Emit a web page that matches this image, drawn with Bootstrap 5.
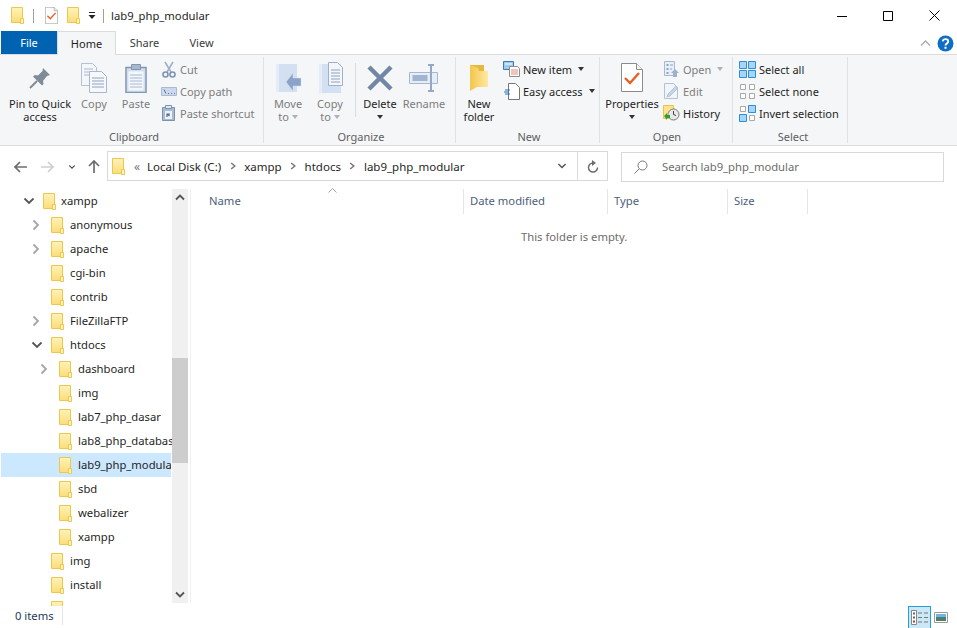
<!doctype html>
<html lang="en">
<head>
<meta charset="utf-8">
<title>lab9_php_modular</title>
<link href="https://cdn.jsdelivr.net/npm/bootstrap@5.3.0/dist/css/bootstrap.min.css" rel="stylesheet">
<style>
html,body{height:100%;margin:0;overflow:hidden}
body{font-family:"Noto Sans","Open Sans","Liberation Sans",sans-serif;font-size:11.25px;color:#1f1f1f;background:#fff;line-height:13px}
svg{display:block;flex:none}
.sprite{width:0;height:0;overflow:hidden}
.win{width:957px;height:628px}
.titlebar{height:31px;padding-left:11px}
.qsep{width:1px;height:14px;background:#a0a0a0}
.qs1{margin:0 11px 0 9px}
.qs2{margin:0 7px 0 5px}
.qgap{margin-left:9px}
.qgap2{margin-left:6px}
.wctl{width:46px;height:31px}
.tabrow{height:23px;padding-left:1px;font-size:11px}
.tb{width:57px;height:23px;color:#3b3b3b}
.tb-file{width:56px;background:#0063b1;color:#fff}
.tb-home{width:59px;height:24px;background:#f5f6f7;border:1px solid #dadbdc;border-bottom:0;position:relative;z-index:1;color:#1f1f1f}
.tabrow-end{padding-right:3px;padding-top:1px;gap:6px}
.ribbon{height:92px;background:#f5f6f7;border-top:1px solid #dadbdc;border-bottom:1px solid #dadbdc;padding-top:2px;font-size:11px}
.rgrp{height:86px;border-right:1px solid #e1e2e3}
.g1{width:264px;padding-left:5px}
.g2{width:192px;padding-left:3px}
.g3{width:144px;padding-left:3px}
.g4{width:133px;padding-left:2px}
.g5{width:115px;padding-left:6px}
.rbody{height:73px;padding-top:1px}
.rlabel{height:13px;text-align:center;color:#5f5f5f}
.bigb{display:flex;flex-direction:column;align-items:center;text-align:center}
.bigi{height:39px;display:flex;align-items:center;justify-content:center}
.w70{width:70px}.w38{width:38px}.w46{width:46px}.w42{width:42px}.w40{width:40px}.w60{width:60px}
.gs1{margin-left:1px}
.gs2{margin-left:3px}
.gs3{margin-left:4px}
.gs4{margin-left:1px}
.vsep{width:1px;height:54px;background:#dadbdc;margin:5px 4px 0 4px}
.smcol{display:flex;flex-direction:column}
.smb{height:22px;display:flex;align-items:center;gap:3px;white-space:nowrap}
.smi{width:17px;height:17px;display:flex;align-items:center;justify-content:center;flex:none}
.dis{color:#7d7d7d}
.ena{color:#1f1f1f}
.crt{display:inline-block;width:0;height:0;border:3px solid transparent;border-top:4px solid #333;border-bottom:0;vertical-align:2px;margin-left:3px}
.crt-d{border-top-color:#b0b0b0}
.crt-line{display:block;margin:5px auto 0}
.navrow{height:41px}
.navbtns{width:107px;padding-left:8px}
.navbtn{width:24px;height:24px}
.nb-mid{width:30px}
.nb-small{width:20px}
.addr{width:501px;height:30px;border:1px solid #d9d9d9;margin-top:-1px}
.addr-f{margin:0 9px 0 4px}
.crumbs{color:#1f1f1f;white-space:nowrap;font-size:11.5px}
.bq{width:13px;color:#777;font-size:12px}
.csep{width:23px}
.addr-dd{width:30px;height:100%}
.addr-rf{width:30px;height:100%;border-left:1px solid #d9d9d9}
.search{width:323px;height:30px;margin-left:13px;border:1px solid #d9d9d9;padding-left:12px;color:#6d6d6d;gap:14px}
.main{height:419px}
.treewrap{width:172px;padding-top:2px;overflow:hidden}
.trow{height:24px;white-space:nowrap;overflow:hidden}
.l0{padding-left:23px}.l1{padding-left:31px}.l2{padding-left:39px}
.tchev{width:20px;flex:none}
.tname{margin-left:5px;margin-top:-2px;color:#1f1f1f}
.l1 .tname,.l2 .tname{margin-left:6px}
.trow-sel{background:#cce8ff;margin-left:1px;width:170px}
.trow-sel.l2{padding-left:38px}
.sbar{width:16px;margin-top:2px;margin-bottom:3px;background:#f0f0f0}
.sarr{height:17px}
.strack{flex:1 1 auto}
.sthumb{height:105px;margin-top:152px;background:#cdcdcd}
.vline{width:1px;margin:2px 0 3px 2px;background:#efefef}
.files{flex:1 1 auto;min-width:0}
.chead{height:25px;margin-top:2px;color:#4c607a;padding-left:18px;position:relative}
.hcol{height:25px;line-height:24px;padding-left:6px;border-right:1px solid #e5e5e5}
.hc1{width:255px;padding-left:0}
.hc2{width:144px}.hc3{width:120px}.hc4{width:80px}
.sortc{position:absolute;left:137px;top:-1px}
.empty{margin-top:16px;padding-left:330px;color:#6d6d6d}
.status{height:22px;color:#1e395b;padding-left:15px}
.stxt{padding-right:8px;border-right:1px solid #e5e5e5;line-height:18px;margin-top:-3px}
.views{padding-right:9px;gap:3px}
.vact{width:23px;height:23px;background:#cbe8f6;border:1px solid #26a0da}
</style>
</head>
<body>
<svg class="sprite" width="0" height="0">
<defs>
<linearGradient id="fg" x1="0" y1="0" x2="0" y2="1"><stop offset="0" stop-color="#fff3b8"/><stop offset="1" stop-color="#fddc78"/></linearGradient>
<symbol id="fold" viewBox="0 0 13 17"><path d="M.5.5h11v15H.5z" fill="url(#fg)" stroke="#ebc84f"/><path d="M9.500 11.500h3v5h-3z" fill="#fff3c0" stroke="#ebc84f"/></symbol>
<symbol id="chr" viewBox="0 0 10 12"><path d="M2.5 1.5 7 6l-4.500 4.500" fill="none" stroke="#a6a6a6" stroke-width="1.800"/></symbol>
<symbol id="chd" viewBox="0 0 12 10"><path d="M1.500 2.500 6 7l4.500-4.500" fill="none" stroke="#555" stroke-width="1.800"/></symbol>
<symbol id="prop" viewBox="0 0 22 29"><path d="M.5.500h15l6 6v22H.500z" fill="#fff" stroke="#8c8c8c"/><path d="M15.500.500v6h6" fill="#f2f2f2" stroke="#8c8c8c"/><path d="M4 15l5 5 9-10" fill="none" stroke="#e8601f" stroke-width="2.400"/></symbol>
</defs>
</svg>
<div class="win d-flex flex-column">

  <div class="titlebar d-flex align-items-center">
    <svg width="13" height="17"><use href="#fold"/></svg>
    <span class="qsep qs1"></span>
    <svg width="13" height="17"><use href="#prop"/></svg>
    <svg class="qgap" width="13" height="17"><use href="#fold"/></svg>
    <svg class="qgap2" width="12" height="12" viewBox="0 0 12 12"><path d="M3 2.500h6" stroke="#222"/><path d="M2.500 5h7L6 9z" fill="#222"/></svg>
    <span class="qsep qs2"></span>
    <span>lab9_php_modular</span>
    <div class="ms-auto d-flex">
      <div class="wctl d-flex align-items-center justify-content-center"><svg width="10" height="10" viewBox="0 0 10 10"><path d="M0 5.500h10" stroke="#000"/></svg></div>
      <div class="wctl d-flex align-items-center justify-content-center"><svg width="10" height="10" viewBox="0 0 10 10"><path d="M.5.500h9v9h-9z" fill="none" stroke="#000"/></svg></div>
      <div class="wctl d-flex align-items-center justify-content-center"><svg width="11" height="11" viewBox="0 0 11 11"><path d="M.500.500l10 10M10.500.500l-10 10" stroke="#000"/></svg></div>
    </div>
  </div>

  <div class="tabrow d-flex">
    <div class="tb tb-file d-flex align-items-center justify-content-center">File</div>
    <div class="tb tb-home d-flex align-items-center justify-content-center">Home</div>
    <div class="tb d-flex align-items-center justify-content-center">Share</div>
    <div class="tb d-flex align-items-center justify-content-center">View</div>
    <div class="ms-auto d-flex align-items-center tabrow-end">
      <svg width="11" height="8" viewBox="0 0 11 8"><path d="M1 6.500 5.500 2 10 6.500" fill="none" stroke="#aaa" stroke-width="1.400"/></svg>
      <svg width="17" height="17" viewBox="0 0 17 17"><circle cx="8.500" cy="8.500" r="8" fill="#0f6fc6"/><path d="M5.800 6.400c.2-3 5.400-3 5.400 0 0 2-2.700 2-2.700 4" fill="none" stroke="#fff" stroke-width="1.900"/><path d="M7.500 11.800h2v2h-2z" fill="#fff"/></svg>
    </div>
  </div>

  <div class="ribbon d-flex">
    <div class="rgrp g1">
      <div class="rbody d-flex">
        <div class="bigb w70"><div class="bigi"><svg width="22" height="22" viewBox="0 0 22 22"><path d="M1 21l7-7" stroke="#7f8c97" stroke-width="2"/><path d="M14 1l7 7-3 1-4 5 .5 3-1.500 1.500-9-9L6 8l3 .5 4.500-4.500z" fill="#7f8c97"/></svg></div>Pin to Quick<br>access</div>
        <div class="bigb w38 dis"><div class="bigi"><svg width="26" height="30" viewBox="0 0 26 30"><path d="M.500.500h11l4 4v18H.500z" fill="#f3f6fb" stroke="#b3c2d6"/><path d="M3 6h9M3 9h9M3 12h6" stroke="#a8bad2"/><path d="M8.500 8.500h12l5 5v16h-17z" fill="#f6f8fc" stroke="#a9b8cb"/><path d="M11 15h12M11 18h12M11 21h12M11 24h12" stroke="#8ea4c2"/></svg></div>Copy</div>
        <div class="bigb w46 dis"><div class="bigi"><svg width="22" height="30" viewBox="0 0 22 30"><path d="M1 4.500h20v25H1z" fill="#d4dfee" stroke="#8296b1" stroke-width="1.500"/><path d="M6.500 1.500h9v5h-9z" fill="#a6b7ce" stroke="#8296b1"/><path d="M3.500 8.500h15v19h-15z" fill="#f3f6fb"/><path d="M5 12h12M5 15h12M5 18h12M5 21h12M5 24h12" stroke="#a8bad2"/></svg></div>Paste</div>
        <div class="smcol gs1 dis">
          <div class="smb"><span class="smi"><svg width="14" height="17" viewBox="0 0 14 17"><path d="M3 1l6 10M11 1 5 11" stroke="#9fb0c8" stroke-width="1.600"/><circle cx="3.500" cy="13.500" r="2.500" fill="none" stroke="#7c93b5" stroke-width="1.600"/><circle cx="10.500" cy="13.500" r="2.500" fill="none" stroke="#7c93b5" stroke-width="1.600"/></svg></span>Cut</div>
          <div class="smb"><span class="smi"><svg width="16" height="9" viewBox="0 0 16 9"><path d="M.500.500h15v8H.500z" fill="#ccd9ec" stroke="#a9bad2"/><path d="M3 2.500l2 4M7 6.500h1M10 6.500h1M13 6.500h1" stroke="#5f7696"/></svg></span>Copy path</div>
          <div class="smb"><span class="smi"><svg width="13" height="16" viewBox="0 0 13 16"><path d="M.500 2.500h12v13H.500z" fill="#a9bbd3" stroke="#7d91ad"/><path d="M3.500.500h6v3h-6z" fill="#dfe6f0" stroke="#7d91ad"/><path d="M3 6h7v8H3z" fill="#eef2f8"/><path d="M5 12V9h3M5.500 9l2 2" fill="none" stroke="#4d6a92" stroke-width="1.200"/></svg></span>Paste shortcut</div>
        </div>
      </div>
      <div class="rlabel">Clipboard</div>
    </div>

    <div class="rgrp g2">
      <div class="rbody d-flex">
        <div class="bigb w42 dis"><div class="bigi"><svg width="28" height="30" viewBox="0 0 28 30"><path d="M2 1h21v28H2z" fill="#d3e0f1"/><path d="M2 1h3v28H2z" fill="#e4ecf7"/><path d="M12 19l7-9v5h8v8h-8v5z" fill="#8ba3c6" stroke="#d3e0f1" stroke-width=".5"/></svg></div><span>Move<br>to<span class="crt crt-d"></span></span></div>
        <div class="bigb w42 dis"><div class="bigi"><svg width="28" height="31" viewBox="0 0 28 31"><path d="M3 2h22v29H3z" fill="#d3e0f1"/><path d="M3 2h3v29H3z" fill="#e4ecf7"/><path d="M12.500.500h9l5 5v18h-14z" fill="#f3f6fb" stroke="#9eb1cb"/><path d="M15 8h9M15 11h9M15 14h9M15 17h9M15 20h9" stroke="#8ea4c2"/></svg></div><span>Copy<br>to<span class="crt crt-d"></span></span></div>
        <span class="vsep"></span>
        <div class="bigb w40"><div class="bigi"><svg width="26" height="26" viewBox="0 0 26 26"><path d="M2 2l22 22M24 2 2 24" stroke="#7286a6" stroke-width="4.500"/></svg></div>Delete<span class="crt crt-line"></span></div>
        <div class="bigb w42 gs2 dis"><div class="bigi"><svg width="30" height="28" viewBox="0 0 30 28"><path d="M.500 8.500h28v11H.500z" fill="#e6edf7" stroke="#a5b8d2"/><path d="M3.500 11h15v6h-15z" fill="#a2b5d0"/><path d="M19 1h6M19 27h6M22 1v26" stroke="#94a8c5" stroke-width="2"/></svg></div>Rename</div>
      </div>
      <div class="rlabel">Organize</div>
    </div>

    <div class="rgrp g3">
      <div class="rbody d-flex">
        <div class="bigb w40"><div class="bigi"><svg width="20" height="28" viewBox="0 0 20 28"><defs><linearGradient id="nf" x1="0" y1="0" x2="1" y2="0"><stop offset="0" stop-color="#f3c64b"/><stop offset="1" stop-color="#ffe9a2"/></linearGradient></defs><path d="M1 1h14v22H1z" fill="#e6b93c"/><path d="M1 1l8 3 1 3h9v16H8l-7 4z" fill="url(#nf)"/></svg></div>New<br>folder</div>
        <div class="smcol gs3">
          <div class="smb"><span class="smi"><svg width="17" height="16" viewBox="0 0 17 16"><path d="M.500.500h10v8H.500z" fill="#9ecbee" stroke="#3a7cb8"/><path d="M2 3h7" stroke="#fff"/><path d="M6.500 5.500h8l2 2v8h-10z" fill="#fff" stroke="#8c8c8c"/><path d="M8 9h7M8 11h7M8 13h7" stroke="#e08a7a"/></svg></span>New item<span class="crt"></span></div>
          <div class="smb"><span class="smi"><svg width="16" height="17" viewBox="0 0 16 17"><path d="M4.500.500h7l4 4v12h-11z" fill="#fff" stroke="#777"/><path d="M1 7h5M0 9h5M1 11h5" stroke="#2a6fb5"/></svg></span>Easy access<span class="crt"></span></div>
        </div>
      </div>
      <div class="rlabel">New</div>
    </div>

    <div class="rgrp g4">
      <div class="rbody d-flex">
        <div class="bigb w60"><div class="bigi"><svg width="22" height="29"><use href="#prop"/></svg></div>Properties<span class="crt crt-line"></span></div>
        <div class="smcol dis gs4">
          <div class="smb"><span class="smi"><svg width="15" height="16" viewBox="0 0 15 16"><path d="M.500.500h10v14H.500z" fill="#e9eff7" stroke="#a7b8cf"/><path d="M2.500 3h2v2h-2zM2.500 7h2v2h-2zM2.500 11h2v2h-2z" fill="#8ea4c2"/><path d="M6 4h3M6 8h2" stroke="#8ea4c2"/><path d="M11 8l4 4h-2v4H9v-4H7z" fill="#9fb2cc"/></svg></span>Open<span class="crt crt-d"></span></div>
          <div class="smb"><span class="smi"><svg width="15" height="16" viewBox="0 0 15 16"><path d="M.500.500h9l4 4v11H.500z" fill="#f1f5fa" stroke="#b3c2d6"/><path d="M3 14l1-3 8-8 2 2-8 8z" fill="#c5d3e6" stroke="#9fb2cc" stroke-width=".6"/></svg></span>Edit</div>
          <div class="smb ena"><span class="smi"><svg width="17" height="16" viewBox="0 0 17 16"><path d="M.500.500h10v13H.500z" fill="#ffe48f" stroke="#e8c24c"/><circle cx="10.500" cy="9.500" r="5.500" fill="#e9e9e9" stroke="#777"/><path d="M10.500 6v3.500l2.500 1" fill="none" stroke="#444"/><path d="M1 11l3-3v2h3v3H4v2z" fill="#2f9e2f"/></svg></span>History</div>
        </div>
      </div>
      <div class="rlabel">Open</div>
    </div>

    <div class="rgrp g5">
      <div class="rbody">
        <div class="smcol">
          <div class="smb"><span class="smi"><svg width="17" height="17" viewBox="0 0 17 17"><path d="M.500.500h7v7h-7zM9.500.500h7v7h-7zM.500 9.500h7v7h-7zM9.500 9.500h7v7h-7z" fill="#a8d4f6" stroke="#2b8fdc"/></svg></span>Select all</div>
          <div class="smb"><span class="smi"><svg width="17" height="17" viewBox="0 0 17 17"><path d="M1.500 1.500h5v5h-5zM10.500 1.500h5v5h-5zM1.500 10.500h5v5h-5zM10.500 10.500h5v5h-5z" fill="#fff" stroke="#a8a8a8"/></svg></span>Select none</div>
          <div class="smb"><span class="smi"><svg width="17" height="17" viewBox="0 0 17 17"><path d="M1.500 1.500h5v5h-5zM10.500 10.500h5v5h-5z" fill="#fff" stroke="#a8a8a8"/><path d="M9.500.500h7v7h-7zM.500 9.500h7v7h-7z" fill="#a8d4f6" stroke="#2b8fdc"/></svg></span>Invert selection</div>
        </div>
      </div>
      <div class="rlabel">Select</div>
    </div>
  </div>

  <div class="navrow d-flex align-items-center">
    <div class="navbtns d-flex align-items-center">
      <div class="navbtn d-flex align-items-center justify-content-center"><svg width="13" height="12" viewBox="0 0 13 12"><path d="M6 1 1 6l5 5M1 6h12" fill="none" stroke="#6d6d6d" stroke-width="1.700"/></svg></div>
      <div class="navbtn nb-mid d-flex align-items-center justify-content-center"><svg width="13" height="12" viewBox="0 0 13 12"><path d="M7 1l5 5-5 5M12 6H0" fill="none" stroke="#cfcfcf" stroke-width="1.700"/></svg></div>
      <div class="navbtn nb-small d-flex align-items-center justify-content-center"><svg width="8" height="6" viewBox="0 0 12 10"><use href="#chd"/></svg></div>
      <div class="navbtn d-flex align-items-center justify-content-center"><svg width="12" height="13" viewBox="0 0 12 13"><path d="M1 6l5-5 5 5M6 1v12" fill="none" stroke="#6d6d6d" stroke-width="1.700"/></svg></div>
    </div>
    <div class="addr d-flex align-items-center">
      <svg class="addr-f" width="13" height="17"><use href="#fold"/></svg>
      <div class="crumbs d-flex align-items-center flex-grow-1">
        <span class="bq">«</span>
        <span>Local Disk (C:)</span>
        <span class="csep d-flex justify-content-center"><svg width="6" height="8" viewBox="0 0 10 12"><path d="M2 1l6 5-6 5" fill="none" stroke="#777" stroke-width="2.500"/></svg></span>
        <span>xampp</span>
        <span class="csep d-flex justify-content-center"><svg width="6" height="8" viewBox="0 0 10 12"><path d="M2 1l6 5-6 5" fill="none" stroke="#777" stroke-width="2.500"/></svg></span>
        <span>htdocs</span>
        <span class="csep d-flex justify-content-center"><svg width="6" height="8" viewBox="0 0 10 12"><path d="M2 1l6 5-6 5" fill="none" stroke="#777" stroke-width="2.500"/></svg></span>
        <span>lab9_php_modular</span>
      </div>
      <div class="addr-dd d-flex align-items-center justify-content-center"><svg width="10" height="8" viewBox="0 0 12 10"><use href="#chd"/></svg></div>
      <div class="addr-rf d-flex align-items-center justify-content-center"><svg width="12" height="13" viewBox="0 0 12 13"><path d="M6 3a4.500 4.500 0 1 0 4.500 4.500" fill="none" stroke="#6d6d6d" stroke-width="1.500"/><path d="M5 0l4 3-4 3z" fill="#6d6d6d"/></svg></div>
    </div>
    <div class="search d-flex align-items-center">
      <svg width="14" height="14" viewBox="0 0 14 14"><circle cx="8.500" cy="5.500" r="4.500" fill="none" stroke="#777"/><path d="M5 9l-4.500 4.500" stroke="#777"/></svg>
      <span>Search lab9_php_modular</span>
    </div>
  </div>

  <div class="main d-flex">
    <div class="treewrap">
      <div class="trow l0 d-flex align-items-center"><span class="tchev"><svg width="12" height="10"><use href="#chd"/></svg></span><svg width="13" height="17"><use href="#fold"/></svg><span class="tname">xampp</span></div>
      <div class="trow l1 d-flex align-items-center"><span class="tchev"><svg width="10" height="12"><use href="#chr"/></svg></span><svg width="13" height="17"><use href="#fold"/></svg><span class="tname">anonymous</span></div>
      <div class="trow l1 d-flex align-items-center"><span class="tchev"><svg width="10" height="12"><use href="#chr"/></svg></span><svg width="13" height="17"><use href="#fold"/></svg><span class="tname">apache</span></div>
      <div class="trow l1 d-flex align-items-center"><span class="tchev"></span><svg width="13" height="17"><use href="#fold"/></svg><span class="tname">cgi-bin</span></div>
      <div class="trow l1 d-flex align-items-center"><span class="tchev"></span><svg width="13" height="17"><use href="#fold"/></svg><span class="tname">contrib</span></div>
      <div class="trow l1 d-flex align-items-center"><span class="tchev"><svg width="10" height="12"><use href="#chr"/></svg></span><svg width="13" height="17"><use href="#fold"/></svg><span class="tname">FileZillaFTP</span></div>
      <div class="trow l1 d-flex align-items-center"><span class="tchev"><svg width="12" height="10"><use href="#chd"/></svg></span><svg width="13" height="17"><use href="#fold"/></svg><span class="tname">htdocs</span></div>
      <div class="trow l2 d-flex align-items-center"><span class="tchev"><svg width="10" height="12"><use href="#chr"/></svg></span><svg width="13" height="17"><use href="#fold"/></svg><span class="tname">dashboard</span></div>
      <div class="trow l2 d-flex align-items-center"><span class="tchev"></span><svg width="13" height="17"><use href="#fold"/></svg><span class="tname">img</span></div>
      <div class="trow l2 d-flex align-items-center"><span class="tchev"></span><svg width="13" height="17"><use href="#fold"/></svg><span class="tname">lab7_php_dasar</span></div>
      <div class="trow l2 d-flex align-items-center"><span class="tchev"></span><svg width="13" height="17"><use href="#fold"/></svg><span class="tname">lab8_php_database</span></div>
      <div class="trow trow-sel l2 d-flex align-items-center"><span class="tchev"></span><svg width="13" height="17"><use href="#fold"/></svg><span class="tname">lab9_php_modular</span></div>
      <div class="trow l2 d-flex align-items-center"><span class="tchev"></span><svg width="13" height="17"><use href="#fold"/></svg><span class="tname">sbd</span></div>
      <div class="trow l2 d-flex align-items-center"><span class="tchev"></span><svg width="13" height="17"><use href="#fold"/></svg><span class="tname">webalizer</span></div>
      <div class="trow l2 d-flex align-items-center"><span class="tchev"></span><svg width="13" height="17"><use href="#fold"/></svg><span class="tname">xampp</span></div>
      <div class="trow l1 d-flex align-items-center"><span class="tchev"></span><svg width="13" height="17"><use href="#fold"/></svg><span class="tname">img</span></div>
      <div class="trow l1 d-flex align-items-center"><span class="tchev"></span><svg width="13" height="17"><use href="#fold"/></svg><span class="tname">install</span></div>
      <div class="trow l1 d-flex align-items-center"><span class="tchev"></span><svg width="13" height="17"><use href="#fold"/></svg></div>
    </div>
    <div class="sbar d-flex flex-column">
      <div class="sarr d-flex align-items-center justify-content-center"><svg width="10" height="7" viewBox="0 0 10 7"><path d="M1 5.500l4-4 4 4" fill="none" stroke="#555" stroke-width="1.800"/></svg></div>
      <div class="strack"><div class="sthumb"></div></div>
      <div class="sarr d-flex align-items-center justify-content-center"><svg width="10" height="7" viewBox="0 0 10 7"><path d="M1 1.500l4 4 4-4" fill="none" stroke="#555" stroke-width="1.800"/></svg></div>
    </div>
    <div class="vline"></div>
    <div class="files">
      <div class="chead d-flex">
        <svg class="sortc" width="9" height="5" viewBox="0 0 9 5"><path d="M.500 4.500l4-4 4 4" fill="none" stroke="#9aa5b5"/></svg>
        <div class="hcol hc1">Name</div>
        <div class="hcol hc2">Date modified</div>
        <div class="hcol hc3">Type</div>
        <div class="hcol hc4">Size</div>
      </div>
      <div class="empty">This folder is empty.</div>
    </div>
  </div>

  <div class="status d-flex align-items-center">
    <span class="stxt">0 items</span>
    <div class="views ms-auto d-flex align-items-center">
      <div class="vact d-flex align-items-center justify-content-center"><svg width="17" height="15" viewBox="0 0 17 15"><path d="M.500.500h5v14h-5z" fill="#fff" stroke="#888"/><path d="M2 2.500h2v2H2zM2 6.500h2v2H2z" fill="#666"/><path d="M2 10.500h2v2H2z" fill="#c0392b"/><path d="M7 3h4M13 3h4M7 7.500h4M13 7.500h4M7 12h4M13 12h4" stroke="#777"/></svg></div>
      <svg width="14" height="11" viewBox="0 0 14 11"><path d="M.500.500h13v10H.500z" fill="#fff" stroke="#9a9a9a"/><path d="M2 2h10v3H2z" fill="#6fb4e8"/><path d="M2 5h10v4H2z" fill="#4f7f6a"/></svg>
    </div>
  </div>
</div>
<script src="https://cdn.jsdelivr.net/npm/bootstrap@5.3.0/dist/js/bootstrap.bundle.min.js"></script>
</body>
</html>
